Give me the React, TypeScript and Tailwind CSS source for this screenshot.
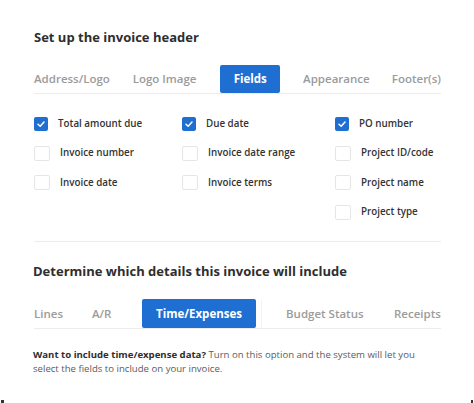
import React from "react";

function Check({ checked, label }: { checked: boolean; label: string }) {
  return (
    <div className="flex items-center h-[29.5px]">
      {checked ? (
        <span className="w-[14px] h-[14px] bg-[#1f6fd3] rounded-[2px] flex items-center justify-center">
          <svg width="10" height="10" viewBox="0 0 10 10">
            <polyline points="2,5.2 4.2,7.2 8,3" fill="none" stroke="white" strokeWidth="1.5" strokeLinecap="round" strokeLinejoin="round" />
          </svg>
        </span>
      ) : (
        <span className="w-[16px] h-[15px] border border-[#e6e6e6] rounded-[2px] bg-white" />
      )}
      <span className="ml-[10px] text-[9.8px] font-semibold text-[#333333] leading-none">{label}</span>
    </div>
  );
}

export default function App() {
  const col1: [boolean, string][] = [
    [true, "Total amount due"],
    [false, "Invoice number"],
    [false, "Invoice date"],
  ];
  const col2: [boolean, string][] = [
    [true, "Due date"],
    [false, "Invoice date range"],
    [false, "Invoice terms"],
  ];
  const col3: [boolean, string][] = [
    [true, "PO number"],
    [false, "Project ID/code"],
    [false, "Project name"],
    [false, "Project type"],
  ];
  return (
    <div className="w-[474px] h-[403px] bg-white flex flex-col font-['Open_Sans',sans-serif]">
      <div className="pl-[34px] pr-[33px] pt-[28px] flex-1">
        <h2 className="text-[13px] font-bold text-[#2e2e2e] leading-[18px]">Set up the invoice header</h2>
        <div className="mt-[19px] flex items-center h-[29px] border-b border-[#ececec] text-[11.5px] font-semibold text-[#9b9b9b]">
          <span className="w-[99px]">Address/Logo</span>
          <span className="w-[88px]">Logo Image</span>
          <span className="w-[60px] h-[28px] self-start bg-[#1f6fd3] rounded-[2px] text-white font-bold flex items-center justify-center">Fields</span>
          <span className="ml-[23px] w-[89px]">Appearance</span>
          <span>Footer(s)</span>
        </div>
        <div className="mt-[15px] flex">
          <div className="w-[148px]">
            {col1.map(([c, l]) => (
              <Check key={l} checked={c} label={l} />
            ))}
          </div>
          <div className="w-[153px]">
            {col2.map(([c, l]) => (
              <Check key={l} checked={c} label={l} />
            ))}
          </div>
          <div>
            {col3.map(([c, l]) => (
              <Check key={l} checked={c} label={l} />
            ))}
          </div>
        </div>
        <div className="mt-[14px] border-t border-[#ececec]" />
        <h2 className="mt-[20px] -ml-[1px] text-[13px] font-bold text-[#2e2e2e] leading-[18px]">
          Determine which details this invoice will include
        </h2>
        <div className="mt-[19px] flex items-center h-[30px] border-b border-[#ececec] text-[11.5px] font-semibold text-[#9b9b9b]">
          <span className="w-[58px]">Lines</span>
          <span className="w-[50px]">A/R</span>
          <span className="w-[114px] h-[29px] self-start bg-[#1f6fd3] rounded-[2px] text-white font-bold flex items-center justify-center">Time/Expenses</span>
          <span className="ml-[5px] w-px h-[29px] self-start bg-[#f3f3f3]" />
          <span className="ml-[24px] w-[108px]">Budget Status</span>
          <span>Receipts</span>
        </div>
        <p className="mt-[19px] -ml-[1px] text-[9.6px] leading-[14px] text-[#5c5c5c]">
          <span className="font-bold text-[#2e2e2e]">Want to include time/expense data?</span> Turn on this option and the system will let you
          <br />
          select the fields to include on your invoice.
        </p>
      </div>
      <div className="h-[3px] flex justify-between px-[1px]">
        <span className="w-[3px] h-[3px] bg-[#333]" />
        <span className="w-[2px] h-[3px] bg-[#333]" />
      </div>
    </div>
  );
}
